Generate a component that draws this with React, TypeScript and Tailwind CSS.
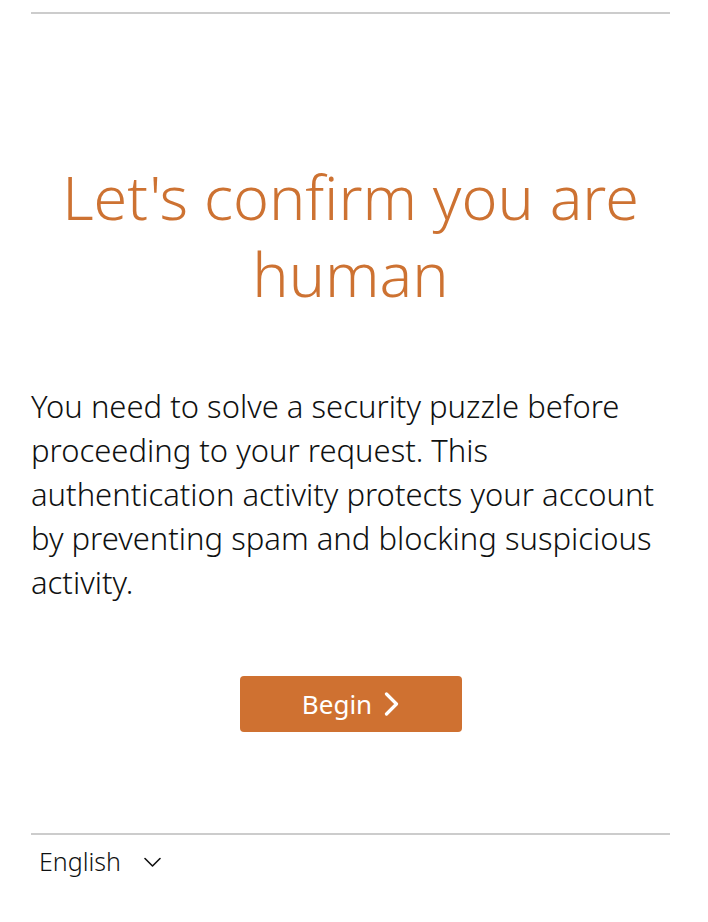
export default function App() {
  return (
    <div
      className="w-[708px] h-[922px] bg-white pl-[31px] pr-[38px] pt-3"
      style={{ fontFamily: '"Noto Sans", "Open Sans", sans-serif' }}
    >
      <div className="border-t-2 border-[#cccccc]" />
      <h1 className="mt-[144px] text-center text-[61px] leading-[77px] text-[#cd7232] font-light">
        Let's confirm you are human
      </h1>
      <p className="mt-[72px] text-[31px] leading-[44px] text-[#0f1111] font-light">
        You need to solve a security puzzle before proceeding to your request. This authentication activity protects your account by preventing spam and blocking suspicious activity.
      </p>
      <div className="mt-[72px] flex justify-center">
        <button className="w-[222px] h-[56px] rounded-[4px] bg-[#cf7131] text-white text-[26px] flex items-center justify-center gap-3">
          Begin
          <svg width="15" height="24" viewBox="0 0 15 24" fill="none" stroke="white" strokeWidth="3.2" strokeLinecap="round" strokeLinejoin="round">
            <path d="M2.5 2l10 10-10 10" />
          </svg>
        </button>
      </div>
      <div className="mt-[101px] border-t-2 border-[#cccccc]" />
      <div className="mt-2 flex items-center gap-[23px] pl-2 text-[25px] text-[#0f1111] font-light">
        English
        <svg width="17" height="10" viewBox="0 0 17 10" fill="none" stroke="#111111" strokeWidth="1.6" strokeLinecap="round" strokeLinejoin="round">
          <path d="M1 1.5l7.5 7.5 7.5-7.5" />
        </svg>
      </div>
    </div>
  )
}
